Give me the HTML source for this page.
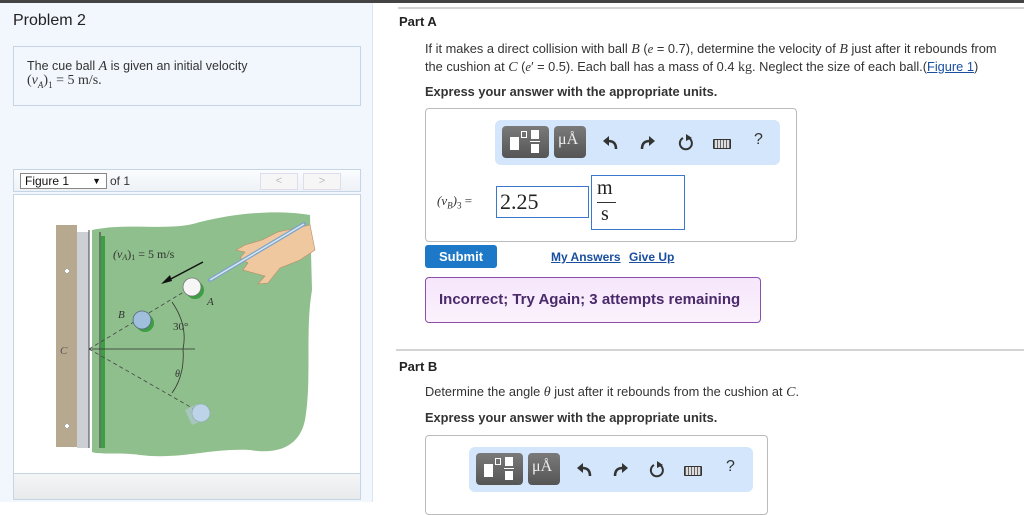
<!DOCTYPE html>
<html><head><meta charset="utf-8">
<style>
*{margin:0;padding:0;box-sizing:border-box}
body{width:1024px;height:502px;position:relative;overflow:hidden;background:#fff;font-family:"Liberation Sans",Arial,sans-serif;color:#333}
.a{position:absolute}
.m{font-family:"Liberation Serif",serif}
.tb{position:absolute;background:#d3e6fb;border-radius:6px}
.btn{position:absolute;background:linear-gradient(#7a7a7a,#555);border-radius:4px}
.ic{position:absolute;font-size:18px;color:#333}
</style></head><body>
<svg width="0" height="0" style="position:absolute">
<defs>
<g id="undo"><path d="M14 15 C14 9 11 7 6 7" stroke="#333" stroke-width="2.6" fill="none"/><path d="M1 7 L7 2 L7 12 Z" fill="#333"/></g>
<g id="redo"><path d="M2 15 C2 9 5 7 10 7" stroke="#333" stroke-width="2.6" fill="none"/><path d="M15 7 L9 2 L9 12 Z" fill="#333"/></g>
<g id="reset"><path d="M11.5 4.5 A6 6 0 1 1 5 4" stroke="#333" stroke-width="2" fill="none"/><path d="M8 0 L14 4 L8 7 Z" fill="#333"/></g>
</defs></svg>
<div class="a" style="left:0;top:0;width:1024px;height:3px;background:#444"></div>
<!-- left panel -->
<div class="a" style="left:0;top:3px;width:373px;height:499px;background:#f2f7fd;border-right:1px solid #dde5ee"></div>
<div class="a" style="left:13px;top:12px;font-size:16px;color:#222">Problem 2</div>
<div class="a" style="left:13px;top:46px;width:348px;height:60px;border:1px solid #c5d5e6;background:#f2f7fd"></div>
<div class="a" style="left:27px;top:59px;font-size:12.5px;color:#333">The cue ball <i class="m" style="font-size:14px">A</i> is given an initial velocity</div>
<div class="a m" style="left:27px;top:73px;font-size:14px;color:#333">(<i>v<sub style="font-size:9px">A</sub></i>)<sub style="font-size:9px">1</sub> = 5 m/s.</div>
<div class="a" style="left:13px;top:169px;width:348px;height:23px;border:1px solid #c5d5e6;background:linear-gradient(#fafcfe,#eef2f6)"></div>
<div class="a" style="left:20px;top:173px;width:87px;height:16px;border:1px solid #888;background:#fff;font-size:12px;line-height:14px;padding-left:4px;color:#111">Figure 1<span style="position:absolute;right:5px;font-size:9px">▼</span></div>
<div class="a" style="left:110px;top:174px;font-size:12px;color:#333">of 1</div>
<div class="a" style="left:260px;top:173px;width:38px;height:17px;border:1px solid #dde;background:#f6f6f6;color:#bbb;font-size:11px;text-align:center;line-height:15px">&lt;</div>
<div class="a" style="left:303px;top:173px;width:38px;height:17px;border:1px solid #dde;background:#f6f6f6;color:#bbb;font-size:11px;text-align:center;line-height:15px">&gt;</div>
<div class="a" style="left:13px;top:194px;width:348px;height:280px;border:1px solid #c5d5e6;background:#fff"></div>
<div class="a" style="left:13px;top:473px;width:348px;height:27px;border:1px solid #c5d5e6;background:linear-gradient(#f4f5f6,#e8eaec)"></div>
<svg class="a" style="left:0;top:190px" width="373" height="290" viewBox="0 190 373 290">
<path d="M92 230 C130 222 170 232 200 222 C240 212 280 210 310 215 L312 290 C305 330 312 380 305 420 C300 445 280 455 250 450 C210 448 180 460 140 455 C120 452 100 455 92 452 Z" fill="#8fbf8c"/>
<rect x="56" y="225" width="21" height="222" fill="#b7a890"/>
<rect x="77" y="232" width="12" height="216" fill="#ccd0d4"/>
<line x1="89" y1="230" x2="89" y2="448" stroke="#444" stroke-width="1"/>
<line x1="100" y1="232" x2="100" y2="448" stroke="#333" stroke-width="1"/>
<rect x="101" y="236" width="4" height="212" fill="#3e9e44"/>
<g fill="#fff" stroke="#777" stroke-width=".5"><path d="M67 268 l3 3 -3 3 -3 -3z"/><path d="M67 423 l3 3 -3 3 -3 -3z"/></g>
<text x="60" y="354" font-family="Liberation Serif" font-style="italic" font-size="11" fill="#555">C</text>
<line x1="89" y1="349" x2="195" y2="349" stroke="#333" stroke-width=".8"/>
<path d="M89 349 L192 287 M89 349 L201 413" stroke="#444" stroke-width=".8" stroke-dasharray="4,3" fill="none"/>
<path d="M172 302 Q188 325 183 349 Q185 375 172 393" stroke="#333" stroke-width=".8" fill="none"/>
<text x="173" y="330" font-family="Liberation Serif" font-size="11" fill="#333">30°</text>
<text x="175" y="377" font-family="Liberation Serif" font-style="italic" font-size="10" fill="#333">θ</text>
<circle cx="145" cy="323" r="9" fill="#3e9e44"/><circle cx="142" cy="320" r="9" fill="#9fbfdc" stroke="#567" stroke-width=".8"/>
<text x="118" y="318" font-family="Liberation Serif" font-style="italic" font-size="11" fill="#333">B</text>
<circle cx="195" cy="290" r="9" fill="#3e9e44"/><circle cx="192" cy="287" r="9" fill="#f6f6f6" stroke="#777" stroke-width=".8"/>
<text x="207" y="305" font-family="Liberation Serif" font-style="italic" font-size="11" fill="#333">A</text>
<path d="M185 410 L197 404 L204 420 L192 425 Z" fill="#b7cde0" opacity=".6"/>
<circle cx="201" cy="413" r="9" fill="#bcd3e8" stroke="#8aa" stroke-width=".6"/>
<text x="113" y="258" font-family="Liberation Serif" font-size="12" fill="#333"><tspan font-style="italic">(v<tspan font-size="8" dy="2">A</tspan></tspan><tspan dy="-2">)</tspan><tspan font-size="8" dy="2">1</tspan><tspan dy="-2"> = 5 m/s</tspan></text>
<line x1="203" y1="262" x2="165" y2="282" stroke="#111" stroke-width="1.5"/>
<path d="M161 284 L170 275 L172 281 Z" fill="#111"/>
<path d="M245 245 L262 240 L278 232 L310 225 L315 250 L300 260 L280 268 L268 283 L258 284 L265 276 L243 270 L248 263 L240 258 L245 252 L236 250 Z" fill="#f0c8a0" stroke="#b98a66" stroke-width=".6"/>
<line x1="210" y1="280" x2="304" y2="224" stroke="#7ea4c8" stroke-width="4" stroke-linecap="round"/>
<line x1="210" y1="280" x2="304" y2="224" stroke="#d8e6f2" stroke-width="1.5"/>
</svg>
<!-- right -->
<div class="a" style="left:398px;top:7px;width:626px;height:2px;background:#d4d4d4"></div>
<div class="a" style="left:399px;top:14px;font-size:13px;font-weight:bold;color:#222">Part A</div>
<div class="a" style="left:425px;top:40px;font-size:12.8px;color:#333;line-height:17px;width:592px">If it makes a direct collision with ball <i class="m" style="font-size:14px">B</i> (<i class="m">e</i> = 0.7), determine the velocity of <i class="m" style="font-size:14px">B</i> just after it rebounds from the cushion at <i class="m" style="font-size:14px">C</i> (<i class="m">e</i>′ = 0.5). Each ball has a mass of 0.4 <span class="m" style="font-size:14px">kg</span>. Neglect the size of each ball.(<span style="color:#1a4fa0;text-decoration:underline">Figure 1</span>)</div>
<div class="a" style="left:425px;top:84px;font-size:12.8px;font-weight:bold;color:#333">Express your answer with the appropriate units.</div>
<div class="a" style="left:425px;top:108px;width:372px;height:134px;border:1px solid #bbb;border-radius:4px"></div>
<div class="tb" style="left:495px;top:120px;width:285px;height:45px"></div>
<div class="btn" style="left:502px;top:126px;width:47px;height:32px"></div>
<div class="a" style="left:510px;top:137px;width:9px;height:13px;background:#fff"></div>
<div class="a" style="left:521px;top:131px;width:6px;height:7px;border:1px solid #fff"></div>
<div class="a" style="left:531px;top:130px;width:8px;height:9px;background:#fff"></div>
<div class="a" style="left:530px;top:141px;width:10px;height:1px;background:#fff"></div>
<div class="a" style="left:531px;top:144px;width:8px;height:9px;background:#fff"></div>
<div class="btn" style="left:554px;top:126px;width:32px;height:32px"></div>
<div class="a m" style="left:558px;top:131px;font-size:16px;color:#eee">μÅ</div>
<svg class="a" style="left:602px;top:134px" width="16" height="16"><use href="#undo"/></svg>
<svg class="a" style="left:640px;top:134px" width="16" height="16"><use href="#redo"/></svg>
<svg class="a" style="left:677px;top:133px" width="17" height="18"><use href="#reset" transform="translate(1,1)"/></svg>
<div class="a" style="left:713px;top:139px;width:18px;height:10px;border:1px solid #333;border-radius:1px;background:repeating-linear-gradient(90deg,#666 0 1px,#ddd 1px 3px)"></div>
<div class="ic" style="left:754px;top:131px;font-size:16px">?</div>
<div class="a m" style="left:437px;top:193px;font-size:13px;color:#333"><i>(v<sub style="font-size:9px">B</sub>)</i><sub style="font-size:9px">3</sub> =</div>
<div class="a m" style="left:496px;top:186px;width:93px;height:32px;border:1px solid #3a78d0;font-size:22px;padding-left:3px;line-height:30px;color:#222">2.25</div>
<div class="a m" style="left:591px;top:175px;width:94px;height:55px;border:1px solid #3a78d0"></div>
<div class="a m" style="left:597px;top:177px;font-size:20px;color:#222">m</div>
<div class="a" style="left:597px;top:202px;width:19px;height:1px;background:#333"></div>
<div class="a m" style="left:601px;top:203px;font-size:20px;color:#222">s</div>
<div class="a" style="left:425px;top:245px;width:72px;height:23px;background:#1d78c7;border-radius:3px;color:#fff;font-size:13px;font-weight:bold;text-align:center;line-height:23px">Submit</div>
<div class="a" style="left:551px;top:250px;font-size:12px;font-weight:bold;color:#1a4fa0;text-decoration:underline">My Answers</div>
<div class="a" style="left:629px;top:250px;font-size:12px;font-weight:bold;color:#1a4fa0;text-decoration:underline">Give Up</div>
<div class="a" style="left:425px;top:277px;width:336px;height:46px;border:1px solid #8a4fa8;border-radius:4px;background:linear-gradient(#f6e6fb,#fbf2fd);color:#4a2a6a;font-size:15px;font-weight:bold;line-height:44px;padding-left:13px">Incorrect; Try Again; 3 attempts remaining</div>
<div class="a" style="left:396px;top:349px;width:628px;height:2px;background:#d4d4d4"></div>
<div class="a" style="left:399px;top:359px;font-size:13px;font-weight:bold;color:#222">Part B</div>
<div class="a" style="left:425px;top:384px;font-size:12.8px;color:#333">Determine the angle <i class="m" style="font-size:14px">θ</i> just after it rebounds from the cushion at <i class="m" style="font-size:14px">C</i>.</div>
<div class="a" style="left:425px;top:410px;font-size:12.8px;font-weight:bold;color:#333">Express your answer with the appropriate units.</div>
<div class="a" style="left:425px;top:435px;width:343px;height:80px;border:1px solid #bbb;border-radius:4px"></div>
<div class="tb" style="left:469px;top:447px;width:284px;height:45px"></div>
<div class="btn" style="left:476px;top:453px;width:47px;height:32px"></div>
<div class="a" style="left:484px;top:464px;width:9px;height:13px;background:#fff"></div>
<div class="a" style="left:495px;top:458px;width:6px;height:7px;border:1px solid #fff"></div>
<div class="a" style="left:505px;top:457px;width:8px;height:9px;background:#fff"></div>
<div class="a" style="left:504px;top:468px;width:10px;height:1px;background:#fff"></div>
<div class="a" style="left:505px;top:471px;width:8px;height:9px;background:#fff"></div>
<div class="btn" style="left:528px;top:453px;width:32px;height:32px"></div>
<div class="a m" style="left:532px;top:458px;font-size:16px;color:#eee">μÅ</div>
<svg class="a" style="left:576px;top:461px" width="16" height="16"><use href="#undo"/></svg>
<svg class="a" style="left:613px;top:461px" width="16" height="16"><use href="#redo"/></svg>
<svg class="a" style="left:648px;top:460px" width="17" height="18"><use href="#reset" transform="translate(1,1)"/></svg>
<div class="a" style="left:684px;top:466px;width:18px;height:10px;border:1px solid #333;border-radius:1px;background:repeating-linear-gradient(90deg,#666 0 1px,#ddd 1px 3px)"></div>
<div class="ic" style="left:726px;top:458px;font-size:16px">?</div>
</body></html>
